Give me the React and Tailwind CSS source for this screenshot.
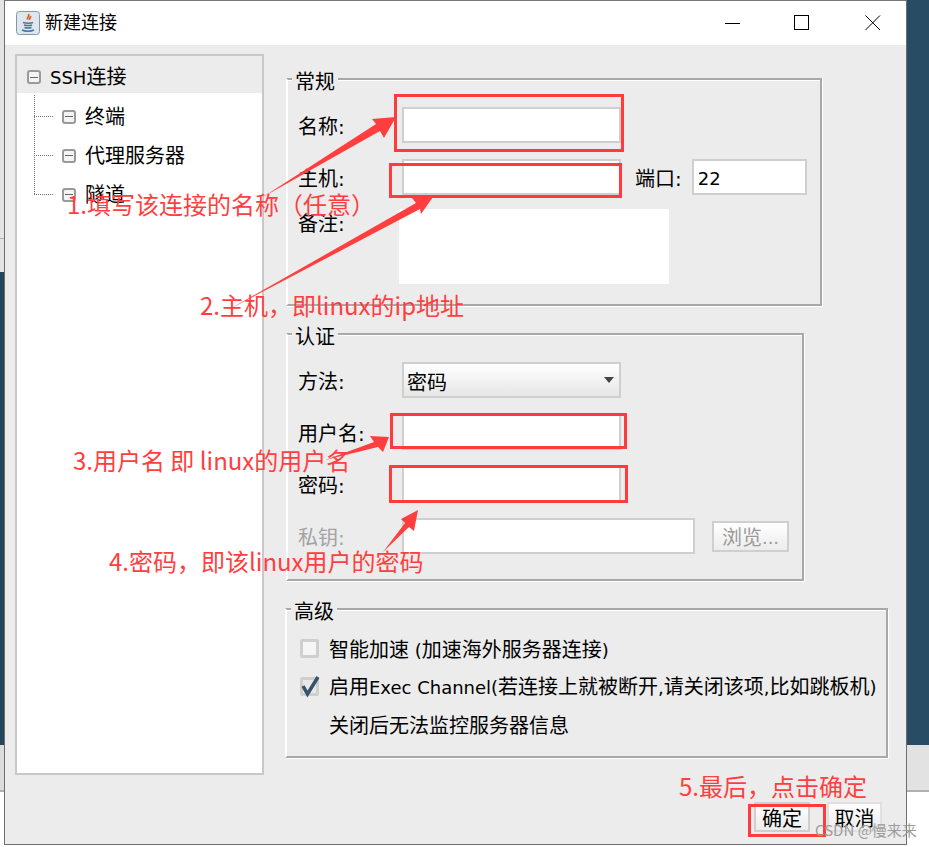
import React from 'react';

const uiFont = { fontFamily: '"DejaVu Sans", "Noto Sans CJK SC", sans-serif' };

const TreeIcon = () => (
    <span className="flex h-[14px] w-[14px] shrink-0 items-center justify-center rounded-[3px] border-2 border-[#9a9a9a] bg-[#f4f4f4]">
        <span className="h-px w-[8px] bg-[#666666]" />
    </span>
);

const TreeChild = ({ label }) => (
    <div className="flex h-[39px] items-center">
        <span className="w-[19px] border-t border-dotted border-[#777777]" />
        <span className="ml-[9px]"><TreeIcon /></span>
        <span className="ml-[9px] pt-[1px] text-[20px] leading-none">{label}</span>
    </div>
);

const Field = ({ className }) => (
    <div className={`h-[36px] border-2 border-[#cfcfcf] bg-white ${className}`} />
);

const Group = ({ title, className, children }) => (
    <section className={`relative border-y-2 border-r-2 border-l-2 border-y-[#a8a8a8] border-r-[#a8a8a8] border-l-white shadow-[1px_1px_0_#ffffff,inset_0_1px_0_#ffffff] ${className}`}>
        <span className="absolute top-[-10px] left-[4px] bg-[#ececec] px-[3px] text-[20px] leading-[24px]">{title}</span>
        {children}
    </section>
);

const Label = ({ children, muted }) => (
    <span className={`inline-block pt-[8px] text-[20px] leading-none ${muted ? 'text-[#a3a3a3]' : 'text-black'}`}>{children}</span>
);

const RedBox = ({ className }) => (
    <div className={`pointer-events-none absolute border-[3px] border-[#ff3b3b] ${className}`} />
);

const Note = ({ className, children }) => (
    <span className={`absolute whitespace-nowrap text-[24px] leading-none text-[#ff3f3f] ${className}`} style={{ fontFamily: '"Noto Sans CJK SC", sans-serif' }}>
        {children}
    </span>
);

const Latin = ({ children }) => <span className="text-[18px]">{children}</span>;

const App = () => {
    return (
        <div className="relative flex h-[847px] w-[929px] overflow-hidden bg-white text-black" style={uiFont}>
            {/* what shows behind the dialog */}
            <div className="flex w-[4px] flex-col">
                <div className="h-[238px] bg-[#e4e4e4]" />
                <div className="h-px bg-[#b0b0b0]" />
                <div className="h-[33px] bg-[#e4e4e4]" />
                <div className="h-[473px] bg-[#24465a]" />
                <div className="h-[45px] bg-[#dcdcdc]" />
                <div className="h-[2px] bg-[#b0b0b0]" />
                <div className="flex-1 bg-white" />
            </div>

            {/* dialog */}
            <div className="flex h-[845px] w-[903px] flex-col border-x border-b border-[#6e6e6e] bg-[#ececec]">
                <div className="flex h-[45px] items-center border-t border-[#777777] bg-white">
                    <svg className="ml-[11px] h-[24px] w-[24px]" viewBox="0 0 24 24">
                        <rect x="0.5" y="0.5" width="23" height="23" rx="3" fill="#dfe6ee" stroke="#7f99b3" />
                        <path d="M12.5 3c1.5 2-2 3.500-1 5.500M14.500 5c.5 1.500-1.500 2.500-1 4" fill="none" stroke="#d9622b" strokeWidth="1.800" />
                        <path d="M7 11.500c3 1 8 1 10 0M8 14c2.500.7 6 .7 8 0M8.500 16.500c2 .6 5 .6 7 0M6 19c3 1.500 9 1.500 12 0" fill="none" stroke="#4d7396" strokeWidth="1.500" />
                    </svg>
                    <span className="ml-[5px] text-[18px] leading-none">新建连接</span>
                    <svg className="ml-auto h-[16px] w-[16px]" viewBox="0 0 16 16">
                        <path d="M0 8.500H15" stroke="#000000" />
                    </svg>
                    <svg className="ml-[53px] h-[16px] w-[16px]" viewBox="0 0 16 16">
                        <rect x="0.500" y="0.500" width="14" height="14" fill="none" stroke="#000000" />
                    </svg>
                    <svg className="mr-[25px] ml-[55px] h-[16px] w-[16px]" viewBox="0 0 16 16">
                        <path d="M0.500 0.500L15 15M15 0.500L0.500 15" stroke="#000000" />
                    </svg>
                </div>

                <div className="relative flex flex-1 pt-[9px] pl-[10px]">
                    {/* tree */}
                    <aside className="h-[721px] w-[249px] shrink-0 border-2 border-[#c8c8c8] bg-white">
                        <div className="flex h-[37px] items-center bg-[#ececec] pt-[5px] pl-[10px]">
                            <TreeIcon />
                            <span className="ml-[9px] text-[20px] leading-none">
                                <Latin>SSH</Latin>连接
                            </span>
                        </div>
                        <div className="relative ml-[17px] pt-[4px]">
                            <span className="absolute top-[2px] left-0 h-[99px] border-l border-dotted border-[#777777]" />
                            <TreeChild label="终端" />
                            <TreeChild label="代理服务器" />
                            <TreeChild label="隧道" />
                        </div>
                    </aside>

                    {/* form */}
                    <div className="ml-[22px] flex w-[602px] flex-col pt-[24px]">
                        <Group title="常规" className="h-[228px] w-[536px] pt-[27px] pl-[114px]">
                            <div className="flex h-[36px] items-center">
                                <span className="-ml-[104px] w-[104px]"><Label>名称:</Label></span>
                                <Field className="w-[219px]" />
                            </div>
                            <div className="mt-[16px] flex h-[36px] items-center">
                                <span className="-ml-[104px] w-[104px]"><Label>主机:</Label></span>
                                <Field className="w-[219px]" />
                                <span className="ml-[14px]"><Label>端口:</Label></span>
                                <div className="ml-[10px] flex h-[36px] w-[115px] items-center border-2 border-[#cfcfcf] bg-white pt-[4px] pl-[4px] text-[18px] leading-none">22</div>
                            </div>
                            <div className="mt-[14px] flex">
                                <span className="-mt-[3px] -ml-[104px] w-[101px]"><Label>备注:</Label></span>
                                <div className="h-[75px] w-[270px] bg-white" />
                            </div>
                        </Group>

                        <Group title="认证" className="mt-[27px] h-[248px] w-[518px] pt-[27px] pl-[114px]">
                            <div className="flex h-[36px] items-center">
                                <span className="-ml-[104px] w-[104px]"><Label>方法:</Label></span>
                                <div className="flex h-[36px] w-[219px] items-center justify-between border-2 border-[#cfcfcf] bg-gradient-to-b from-white to-[#e6e6e6] pr-[5px] pl-[3px] text-[20px]">
                                    <span className="pt-[6px] leading-none">密码</span>
                                    <svg className="h-[6px] w-[10px]" viewBox="0 0 10 6"><path d="M0 0H10L5 6Z" fill="#444444" /></svg>
                                </div>
                            </div>
                            <div className="mt-[16px] flex h-[36px] items-center">
                                <span className="-ml-[104px] w-[104px]"><Label>用户名:</Label></span>
                                <Field className="w-[219px]" />
                            </div>
                            <div className="mt-[16px] flex h-[36px] items-center">
                                <span className="-ml-[104px] w-[104px]"><Label>密码:</Label></span>
                                <Field className="w-[219px]" />
                            </div>
                            <div className="mt-[16px] flex h-[36px] items-center">
                                <span className="-ml-[104px] w-[104px]"><Label muted>私钥:</Label></span>
                                <Field className="w-[293px]" />
                                <div className="ml-[17px] flex h-[31px] w-[77px] items-center justify-center border-2 border-[#cfcfcf] bg-gradient-to-b from-white to-[#ececec] pt-[3px] text-[20px] leading-none text-[#9a9a9a]">
                                    浏览<Latin>...</Latin>
                                </div>
                            </div>
                        </Group>

                        <Group title="高级" className="mt-[27px] -ml-px h-[150px] w-[603px] pt-[19px] pl-[13px] text-[20px] leading-none">
                            <div className="flex h-[38px] items-center">
                                <span className="h-[19px] w-[19px] shrink-0 rounded-[2px] border-[3px] border-[#cfcfcf] bg-[#f5f5f5]" />
                                <span className="ml-[10px] pt-[3px]">智能加速<Latin> (</Latin>加速海外服务器连接<Latin>)</Latin></span>
                            </div>
                            <div className="flex h-[38px] items-center">
                                <span className="relative h-[19px] w-[19px] shrink-0 rounded-[2px] border-[3px] border-[#cfcfcf] bg-[#e8e8e8]">
                                    <svg className="absolute -top-[6px] -left-[3px] h-[24px] w-[21px]" viewBox="0 0 21 24">
                                        <path d="M3 12L7.500 20L18 3" fill="none" stroke="#34546d" strokeWidth="3.500" />
                                    </svg>
                                </span>
                                <span className="ml-[10px] whitespace-nowrap pt-[2px]">
                                    启用<Latin>Exec Channel(</Latin>若连接上就被断开<Latin>,</Latin>请关闭该项<Latin>,</Latin>比如跳板机<Latin>)</Latin>
                                </span>
                            </div>
                            <div className="flex h-[38px] items-center pt-[3px] pl-[29px]">关闭后无法监控服务器信息</div>
                        </Group>

                        <div className="mt-[44px] -ml-px flex w-[603px] justify-end gap-[17px] pr-[6px]">
                            <div className="flex h-[30px] w-[56px] items-center justify-center border-2 border-[#cfcfcf] bg-gradient-to-b from-white to-[#ececec] pt-[3px] text-[20px] leading-none">确定</div>
                            <div className="flex h-[30px] w-[55px] items-center justify-center border-2 border-[#e0e0e0] bg-gradient-to-b from-white to-[#ececec] pt-[3px] text-[20px] leading-none">取消</div>
                        </div>
                    </div>
                </div>
            </div>

            <div className="flex flex-1 flex-col">
                <div className="h-[745px] bg-[#274c63]" />
                <div className="h-[45px] bg-[#e2e2e2]" />
                <div className="h-[2px] bg-[#b0b0b0]" />
                <div className="flex-1 bg-white" />
            </div>

            {/* tutorial annotations drawn over the screenshot */}
            <svg className="pointer-events-none absolute top-0 left-0 h-[847px] w-[929px]" viewBox="0 0 929 847">
                <g fill="#ff3f3f">
                    <path d="M263 197L376 124L372 119L396 117L384 138L380 131Z" />
                    <path d="M228 310L416 203L412 198L433 197L421 214L420 209Z" />
                    <path d="M325 460L374 442L370 436L389 437L383 452L378 447Z" />
                    <path d="M383 552L405 523L401 519L418 510L414 531L409 527Z" />
                </g>
            </svg>
            <RedBox className="top-[94px] left-[394px] h-[58px] w-[230px]" />
            <RedBox className="top-[163px] left-[389px] h-[35px] w-[233px]" />
            <RedBox className="top-[413px] left-[390px] h-[36px] w-[237px]" />
            <RedBox className="top-[465px] left-[389px] h-[38px] w-[239px]" />
            <RedBox className="top-[804px] left-[748px] h-[33px] w-[78px]" />

            <Note className="top-[192px] left-[67px]">1.填写该连接的名称（任意）</Note>
            <Note className="top-[293px] left-[200px]">2.主机，即linux的ip地址</Note>
            <Note className="top-[448px] left-[73px]">3.用户名 即 linux的用户名</Note>
            <Note className="top-[549px] left-[109px]">4.密码，即该linux用户的密码</Note>
            <Note className="top-[774px] left-[679px]">5.最后，点击确定</Note>

            <span className="absolute top-[822px] left-[815px] whitespace-nowrap text-[15px] leading-none text-[#9c9c9c]" style={{ fontFamily: '"Noto Sans CJK SC", sans-serif' }}>CSDN @慢来来</span>
        </div>
    );
};

export default App;
